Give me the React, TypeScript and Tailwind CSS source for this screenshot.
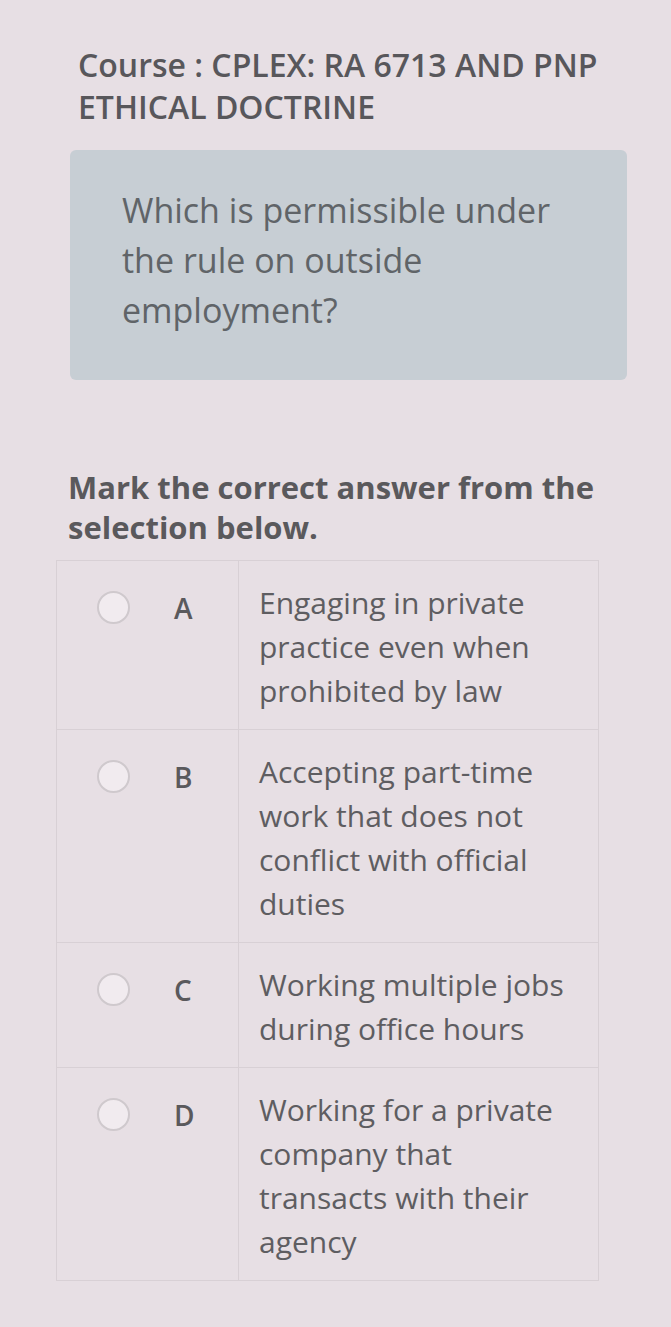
import React from 'react';

interface Option {
  key: string;
  text: string;
}

const OPTIONS: Option[] = [
  { key: 'A', text: 'Engaging in private practice even when prohibited by law' },
  { key: 'B', text: 'Accepting part-time work that does not conflict with official duties' },
  { key: 'C', text: 'Working multiple jobs during office hours' },
  { key: 'D', text: 'Working for a private company that transacts with their agency' },
];

export default function App() {
  return (
    <div
      className="min-h-[1327px] w-full bg-[#e7dfe4] text-[#5b5a5d]"
      style={{ fontFamily: '"Open Sans", "Noto Sans", sans-serif' }}
    >
      <div className="pl-[78px] pr-[30px] pt-[44px]">
        {/* Course title */}
        <h1 className="text-[32px] font-semibold leading-[42px] text-[#58575b] w-[560px]">
          Course : CPLEX: RA 6713 AND PNP ETHICAL DOCTRINE
        </h1>
      </div>

      {/* Question box */}
      <div className="ml-[70px] mr-[44px] mt-[22px] rounded-md bg-[#c7ced4] pl-[52px] pr-[40px] pt-[35px] pb-[45px]">
        <p className="text-[34px] leading-[50px] text-[#606468] w-[450px]">
          Which is permissible under the rule on outside employment?
        </p>
      </div>

      {/* Instruction */}
      <div className="pl-[68px] pr-[40px] mt-[87px]">
        <p className="text-[31px] font-bold leading-[40px] text-[#5a595c]">
          Mark the correct answer from the selection below.
        </p>
      </div>

      {/* Options table */}
      <div className="ml-[56px] mr-[72px] mt-[13px] border border-[#d8d0d5]">
        {OPTIONS.map((o, i) => (
          <div
            key={o.key}
            className={`flex ${i > 0 ? 'border-t border-[#d8d0d5]' : ''}`}
          >
            <div className="flex w-[182px] shrink-0 items-start gap-[44px] border-r border-[#d8d0d5] pl-[40px] pt-[30px]">
              <span className="block h-[33px] w-[33px] shrink-0 rounded-full border-2 border-[#cfc9cd] bg-[#f1ebef]" />
              <span className="text-[28px] font-semibold leading-[34px] text-[#5a595c]">{o.key}</span>
            </div>
            <div className="flex-1 pl-[20px] pr-[16px] pt-[20px] pb-[16px]">
              <p className="text-[30px] leading-[44px] text-[#5e5d61]">{o.text}</p>
            </div>
          </div>
        ))}
      </div>
    </div>
  );
}
